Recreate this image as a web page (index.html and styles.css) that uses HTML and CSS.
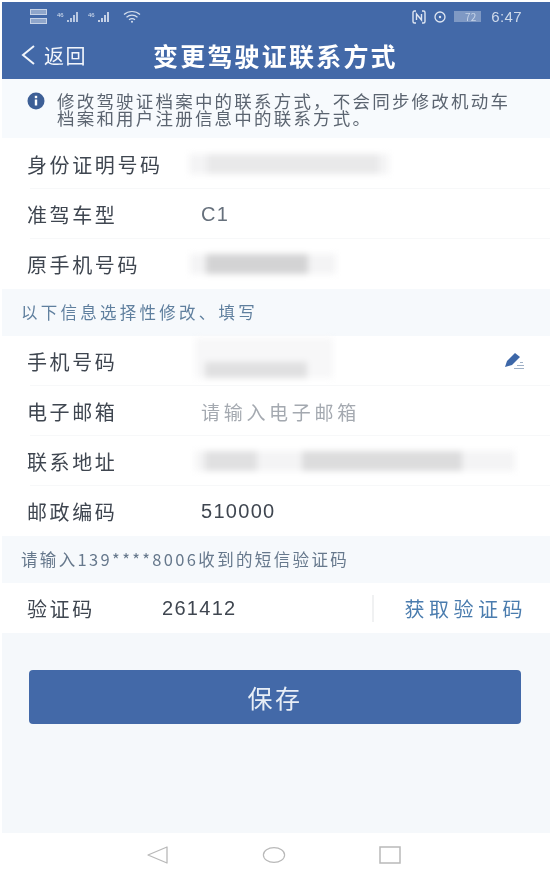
FILE: index.html
```html
<!DOCTYPE html>
<html lang="zh">
<head>
<meta charset="utf-8">
<title>变更驾驶证联系方式</title>
<link rel="stylesheet" href="styles.css">
</head>
<body>
<div class="phone">
  <header class="top">
    <div class="status">
      <div class="status-left">
        <div class="sims"><span class="sim"></span><span class="sim"></span></div>
        <svg class="signal" viewBox="0 0 26 12"><text x="0" y="6" class="sig-text">46</text><path d="M11 11v-2M14 11V7M17 11V4M20 11V1" stroke="#d6e0ef" stroke-width="1.6" fill="none"/></svg>
        <svg class="signal" viewBox="0 0 26 12"><text x="0" y="6" class="sig-text">46</text><path d="M11 11v-2M14 11V7M17 11V4M20 11V1" stroke="#e6ecf5" stroke-width="1.6" fill="none"/></svg>
        <svg class="wifi" viewBox="0 0 18 13"><path d="M1 4.500C5.500.5 12.500.5 17 4.500M3.500 7.200c3.200-2.700 7.800-2.700 11 0M6 9.800c1.800-1.400 4.200-1.400 6 0" stroke="#d6e0ef" stroke-width="1.200" fill="none"/><circle cx="9" cy="11.800" r="1" fill="#d6e0ef"/></svg>
      </div>
      <div class="status-right">
        <svg class="nfc" viewBox="0 0 14 14"><path d="M4 1H2.500Q1 1 1 2.500v9Q1 13 2.500 13H4M10 1h1.500Q13 1 13 2.500v9q0 1.500-1.500 1.500H10" fill="none" stroke="#dfe6f2" stroke-width="1.400"/><path d="M4.500 10V4l5 6V4" fill="none" stroke="#dfe6f2" stroke-width="1.400"/></svg>
        <svg class="alarm" viewBox="0 0 14 14"><circle cx="7" cy="7" r="5" fill="none" stroke="#dfe6f2" stroke-width="1.300"/><circle cx="7" cy="7" r="1.200" fill="#dfe6f2"/></svg>
        <span class="battery">72</span>
        <span class="clock">6:47</span>
      </div>
    </div>
    <div class="nav">
      <div class="back">
        <svg class="chevron" viewBox="0 0 16 22"><path d="M14 2 3 11l11 9" fill="none" stroke="#f1f5fb" stroke-width="2"/></svg>
        <span>返回</span>
      </div>
      <h1 class="title">变更驾驶证联系方式</h1>
    </div>
  </header>

  <div class="notice">
    <svg class="info" viewBox="0 0 18 18"><circle cx="9" cy="9" r="8.500" fill="#3d5f96"/><rect x="7.800" y="7.500" width="2.400" height="6" fill="#fff"/><rect x="7.800" y="3.800" width="2.400" height="2.400" fill="#fff"/></svg>
    <p class="notice-text">修改驾驶证档案中的联系方式，不会同步修改机动车<br>档案和用户注册信息中的联系方式。</p>
  </div>

  <section class="group group-first">
    <div class="row line"><span class="label">身份证明号码</span><div class="mask mask-id"><i class="smear"></i></div></div>
    <div class="row line"><span class="label">准驾车型</span><span class="value light">C1</span></div>
    <div class="row"><span class="label">原手机号码</span><div class="mask mask-phone"><i class="smear dark"></i></div></div>
  </section>

  <div class="hint hint-a">以下信息选择性修改、填写</div>

  <section class="group">
    <div class="row line">
      <span class="label">手机号码</span>
      <div class="mask mask-new"><i class="smear"></i></div>
      <svg class="edit" viewBox="0 0 22 18"><path d="M2 15 4 9 12 1l5 4-8 8z" fill="#3d67a8"/><path d="M11 16.500h10M14 13.500h7M17 10.500h3" stroke="#9fb0c6" stroke-width="1.200"/></svg>
    </div>
    <div class="row line"><span class="label">电子邮箱</span><span class="value placeholder">请输入电子邮箱</span></div>
    <div class="row line"><span class="label">联系地址</span><div class="mask mask-addr"><i class="smear s1"></i><i class="smear s2"></i></div></div>
    <div class="row"><span class="label">邮政编码</span><span class="value">510000</span></div>
  </section>

  <div class="hint hint-b">请输入139****8006收到的短信验证码</div>

  <section class="group">
    <div class="row code-row">
      <span class="label code-label">验证码</span>
      <span class="value code-value">261412</span>
      <span class="get-code">获取验证码</span>
    </div>
  </section>

  <main class="actions">
    <button class="save" type="button">保存</button>
  </main>

  <footer class="softkeys">
    <svg class="key" viewBox="0 0 24 20"><path d="M2 10 21 2v16z" fill="none" stroke="#b9b9b9" stroke-width="1.300" stroke-linejoin="round"/></svg>
    <svg class="key" viewBox="0 0 26 20"><ellipse cx="13" cy="10" rx="11.500" ry="8" fill="none" stroke="#b9b9b9" stroke-width="1.300"/></svg>
    <svg class="key" viewBox="0 0 24 20"><rect x="2" y="2" width="20" height="16" fill="none" stroke="#b9b9b9" stroke-width="1.500"/></svg>
  </footer>
</div>
</body>
</html>
```
FILE: styles.css
```css
* { box-sizing: border-box; }
html, body { margin: 0; padding: 0; background: #fff; }
body { font-family: "Noto Sans CJK SC", "Liberation Sans", sans-serif; }

.phone {
  width: 550px;
  height: 877px;
  padding: 2px 0 0 2px;
  display: flex;
  flex-direction: column;
  overflow: hidden;
  filter: blur(0.5px);
}

.top { background: #4369a8; height: 77px; flex: none; }
.status { height: 29px; display: flex; justify-content: space-between; align-items: center; padding: 0 28px; }
.status-left, .status-right { display: flex; align-items: center; }
.status-left { gap: 5px; }
.sims { display: flex; flex-direction: column; gap: 3px; margin-right: 5px; }
.sim { display: block; width: 17px; height: 6px; border: 1px solid #c6d2e6; background: #8fa6cb; }
.signal { width: 26px; height: 12px; }
.sig-text { font: 6px "Liberation Sans", sans-serif; fill: #d6e0ef; }
.wifi { width: 18px; height: 13px; margin-left: 4px; }
.status-right { gap: 7px; color: #cfdaea; }
.nfc, .alarm { width: 14px; height: 14px; }
.battery { width: 27px; height: 11px; background: #7f99c4; font-size: 10px; line-height: 11px; text-align: right; padding-right: 5px; color: #c5d3e8; }
.clock { font: 15px/18px "Liberation Sans", sans-serif; color: #cfdaea; letter-spacing: .4px; margin-left: 3px; }

.nav { height: 48px; display: flex; align-items: center; padding-left: 18px; color: #f1f5fb; }
.back { width: 133px; display: flex; align-items: center; gap: 8px; font-size: 20px; letter-spacing: 1.500px; }
.chevron { width: 16px; height: 22px; }
.title { margin: 0; font-size: 25px; line-height: 30px; font-weight: 700; letter-spacing: 2.200px; color: #fff; }

.notice { height: 59px; flex: none; background: #f7fafd; display: flex; align-items: flex-start; padding: 13px 0 0 25px; }
.info { width: 18px; height: 18px; flex: none; margin-right: 12px; }
.notice-text { margin: 0; font-size: 17.500px; line-height: 17px; letter-spacing: 2.200px; color: #5b6470; white-space: nowrap; }

.group { background: #fff; flex: none; }
.group-first { padding: 1px 0 0; }
.row { height: 50px; display: flex; align-items: center; padding-left: 25px; position: relative; }
.line::after { content: ""; position: absolute; left: 28px; right: 0; bottom: 0; height: 1px; background: #f7f8f9; }
.label { width: 174px; flex: none; font-size: 20px; letter-spacing: 2.600px; color: #3f4650; }
.value { font: 20px "Liberation Sans", sans-serif; letter-spacing: 1.300px; color: #3f4650; }
.value.light { color: #66707c; }
.value.placeholder { font: 19px "Noto Sans CJK SC", sans-serif; letter-spacing: 3.700px; color: #a4a9b0; }

.mask { height: 20px; background: #f4f4f5; filter: blur(3px); display: flex; }
.mask-id { width: 200px; margin-left: -12px; padding-left: 18px; }
.mask-phone { width: 146px; margin-left: -11px; padding-left: 16px; }
.mask-new { width: 138px; margin-left: -6px; padding-left: 10px; height: 40px; margin-top: -6px; align-items: flex-end; background: #f7f7f8; }
.mask-addr { width: 320px; margin-left: -6px; padding-left: 10px; gap: 45px; }
.smear { display: block; height: 20px; background: #e6e6e7; }
.mask-id .smear { width: 172px; background: #e9e9ea; }
.smear.dark { width: 102px; background: #d3d3d4; }
.mask-new .smear { width: 102px; height: 16px; background: #e0e0e1; }
.smear.s1 { width: 52px; background: #e0e0e1; }
.smear.s2 { width: 160px; background: #dcdcdd; }

.edit { position: absolute; right: 25px; top: 16px; width: 22px; height: 18px; }

.hint { flex: none; background: #f6f9fc; padding-left: 19px; font-size: 16.500px; letter-spacing: 3.250px; color: #5f7f9e; white-space: nowrap; }
.hint-a { height: 47px; line-height: 46px; }
.hint-b { height: 47px; line-height: 46px; letter-spacing: 2.350px; color: #66788c; }

.code-label { width: 135px; }
.code-value { flex: 1; }
.get-code { font-size: 20px; letter-spacing: 4.500px; color: #4a7cae; padding-left: 31px; border-left: 2px solid #f0f1f2; line-height: 27px; margin-right: 23px; white-space: nowrap; }

.actions { flex: 1; background: #f5f8fb; padding: 37px 27px 0; }
.save {
  display: block;
  width: 492px;
  height: 54px;
  border: 0;
  border-radius: 4px;
  background: #4369a8;
  color: #e8eef6;
  font-family: inherit;
  font-size: 25px;
  letter-spacing: 2.500px;
}

.softkeys { height: 44px; flex: none; background: #fff; display: flex; align-items: center; padding-left: 144px; gap: 92px; }
.key { width: 24px; height: 20px; }
```
